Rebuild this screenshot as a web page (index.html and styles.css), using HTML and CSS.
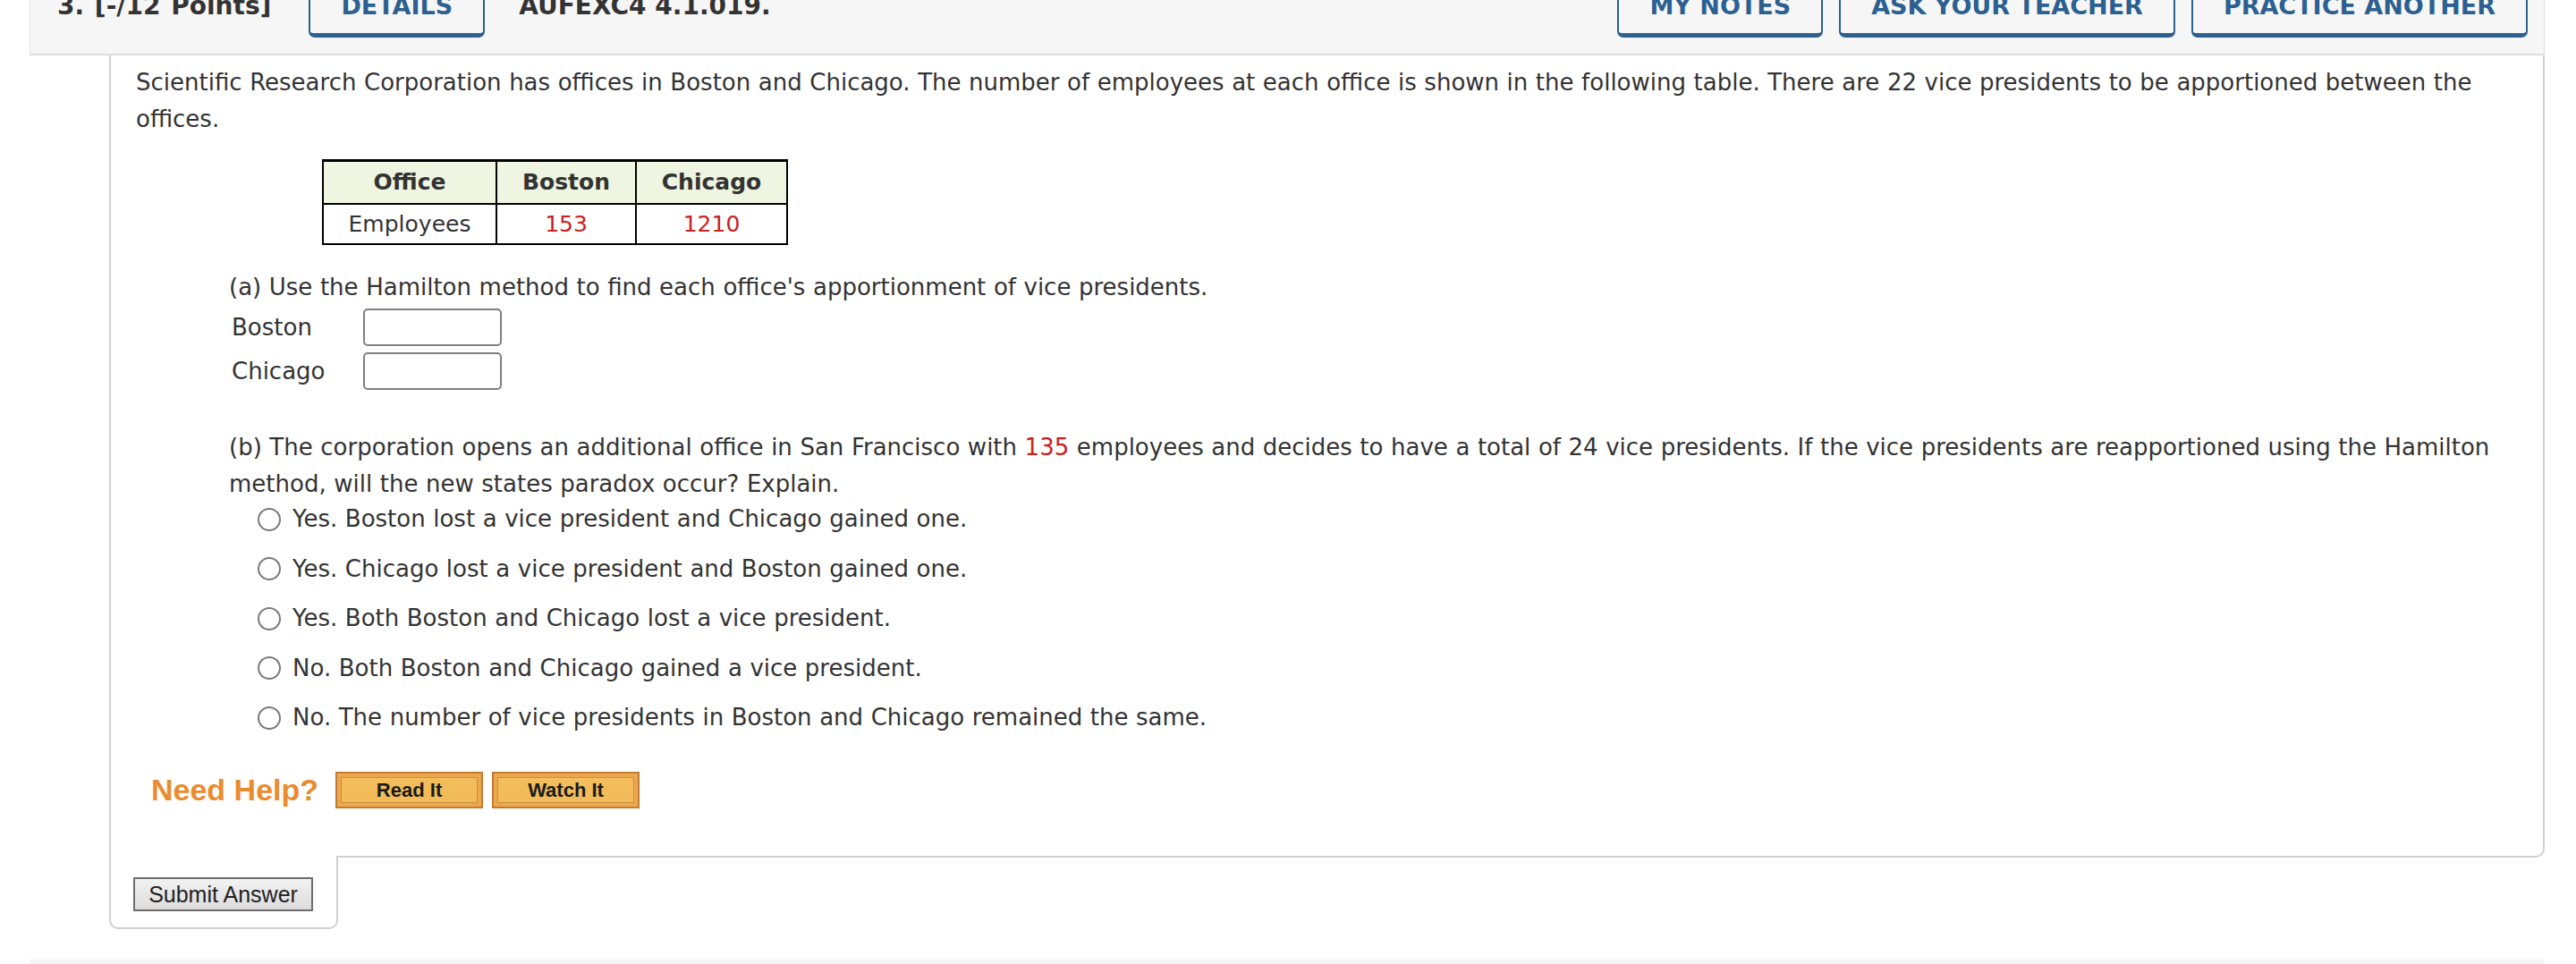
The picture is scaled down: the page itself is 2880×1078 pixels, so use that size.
FILE: index.html
```html
<!DOCTYPE html>
<html lang="en">
<head>
<meta charset="utf-8">
<title>Question 3</title>
<link rel="stylesheet" href="styles.css">
</head>
<body>
<div class="header">
  <div class="title num">3. [-/12 Points]</div>
  <div class="hbtn">DETAILS</div>
  <div class="title code">AUFEXC4 4.1.019.</div>
  <div class="hbtn push">MY NOTES</div>
  <div class="hbtn">ASK YOUR TEACHER</div>
  <div class="hbtn">PRACTICE ANOTHER</div>
</div>
<div class="question">
  <p class="intro">Scientific Research Corporation has offices in Boston and Chicago. The number of employees at each office is shown in the following table. There are 22 vice presidents to be apportioned between the offices.</p>
  <table class="data">
    <tr><th class="c1">Office</th><th class="c2">Boston</th><th class="c3">Chicago</th></tr>
    <tr><td>Employees</td><td class="red">153</td><td class="red">1210</td></tr>
  </table>
  <div class="part parta">
    <p class="ptext">(a) Use the Hamilton method to find each office's apportionment of vice presidents.</p>
    <div class="ans-row"><span class="lbl">Boston</span><input class="ans" type="text"></div>
    <div class="ans-row"><span class="lbl">Chicago</span><input class="ans" type="text"></div>
  </div>
  <div class="part partb">
    <p class="ptext">(b) The corporation opens an additional office in San Francisco with <span class="red">135</span> employees and decides to have a total of 24 vice presidents. If the vice presidents are reapportioned using the Hamilton method, will the new states paradox occur? Explain.</p>
    <ul class="options">
      <li><input type="radio" name="b" class="radio"><span>Yes. Boston lost a vice president and Chicago gained one.</span></li>
      <li><input type="radio" name="b" class="radio"><span>Yes. Chicago lost a vice president and Boston gained one.</span></li>
      <li><input type="radio" name="b" class="radio"><span>Yes. Both Boston and Chicago lost a vice president.</span></li>
      <li><input type="radio" name="b" class="radio"><span>No. Both Boston and Chicago gained a vice president.</span></li>
      <li><input type="radio" name="b" class="radio"><span>No. The number of vice presidents in Boston and Chicago remained the same.</span></li>
    </ul>
  </div>
  <div class="help">
    <span class="need">Need Help?</span>
    <span class="hb read">Read It</span>
    <span class="hb">Watch It</span>
  </div>
</div>
<div class="tab"><button class="submit" type="button">Submit Answer</button></div>
<div class="band"></div>
</body>
</html>
```
FILE: styles.css
```css
html, body {
  margin: 0;
  padding: 0;
  background: #ffffff;
  overflow: hidden;
}
body {
  font-family: "DejaVu Sans", Verdana, sans-serif;
  color: #333333;
}

/* ---------- header ---------- */
.header {
  box-sizing: border-box;
  margin: -40px 0 0 33px;
  width: 2812px;
  height: 102px;
  background: #f6f6f6;
  border-left: 1px solid #e2e2e2;
  border-right: 1px solid #e2e2e2;
  border-bottom: 2px solid #dddddd;
  display: flex;
  align-items: flex-start;
  padding: 0 18px 0 30px;
}
.title {
  font-size: 28px;
  font-weight: bold;
  line-height: 27px;
  margin-top: 33px;
  color: #333333;
  white-space: nowrap;
}
.title.num { margin-right: 42px; word-spacing: 2px; }
.title.code { margin-left: 38px; }
.hbtn {
  box-sizing: border-box;
  height: 82px;
  border: 2px solid #2c6090;
  border-top: none;
  border-bottom-width: 5px;
  border-radius: 0 0 7px 7px;
  padding: 33px 34px 0;
  font-size: 27px;
  font-weight: bold;
  line-height: 27px;
  color: #2c6090;
  white-space: nowrap;
}
.hbtn + .hbtn { margin-left: 18px; }
.hbtn.push { margin-left: auto; }

/* ---------- question box ---------- */
.question {
  box-sizing: border-box;
  margin-left: 122px;
  width: 2723px;
  border: 2px solid #d0d0d0;
  border-top: none;
  border-bottom-right-radius: 10px;
  padding: 10px 35px 53px 28px;
  font-size: 26px;
  line-height: 41px;
  word-spacing: 0.3px;
}
.intro { margin: 0; }
.red { color: #c9211e; }

.data {
  border-collapse: collapse;
  margin: 24px 0 0 208px;
  font-size: 25px;
  line-height: 30px;
  word-spacing: 0;
}
.data th, .data td {
  border: 2px solid #000000;
  padding: 0;
  text-align: center;
}
.data tr:first-child th { border-top-width: 3px; }
.data th {
  background: #eef5e1;
  font-weight: bold;
  height: 46px;
}
.data td { height: 43px; }
.data .c1 { width: 192px; }
.data .c2 { width: 154px; }
.data .c3 { width: 167px; }

.part { margin-left: 104px; }
.ptext { margin: 0; }
.parta { margin-top: 27px; }
.ans-row {
  display: flex;
  align-items: center;
  height: 42px;
  margin-top: 3px;
}
.ans-row + .ans-row { margin-top: 7px; }
.lbl {
  box-sizing: border-box;
  width: 150px;
  padding-left: 3px;
  line-height: 30px;
}
.ans {
  box-sizing: border-box;
  width: 155px;
  height: 42px;
  margin: 0;
  border: 2px solid #7f7f7f;
  border-radius: 5px;
  background: #ffffff;
}

.partb { margin-top: 44px; }
.options {
  list-style: none;
  margin: 0 0 0 32px;
  padding: 0;
}
.options li {
  display: flex;
  align-items: center;
  height: 37px;
  margin-bottom: 18.5px;
}
.options li:last-child { margin-bottom: 0; }
.radio {
  appearance: none;
  -webkit-appearance: none;
  box-sizing: border-box;
  width: 26px;
  height: 26px;
  margin: 0 13px 0 0;
  border: 2px solid #7a7a7a;
  border-radius: 50%;
  background: #ffffff;
}

/* ---------- need help ---------- */
.help {
  display: flex;
  align-items: center;
  height: 41px;
  margin: 42px 0 0 17px;
}
.need {
  font-family: "Liberation Sans", Arial, sans-serif;
  font-weight: bold;
  font-size: 34px;
  color: #e98c30;
  margin-right: 19px;
  line-height: 41px;
  word-spacing: 0;
}
.hb {
  box-sizing: border-box;
  width: 165px;
  height: 41px;
  border: 2px solid #c07c34;
  background: linear-gradient(#f8d488 0, #f3bd5c 18%, #f2ba58 100%);
  box-shadow: inset 0 0 0 4px #efa74c, inset 0 0 0 5px #c2904a;
  font-family: "Liberation Sans", Arial, sans-serif;
  font-weight: bold;
  font-size: 22px;
  color: #1a1a1a;
  display: flex;
  align-items: center;
  justify-content: center;
  word-spacing: 0;
}
.hb.read { margin-right: 10px; }

/* ---------- submit tab ---------- */
.tab {
  box-sizing: border-box;
  margin: -2px 0 0 122px;
  width: 256px;
  height: 82px;
  background: #ffffff;
  border: 2px solid #d0d0d0;
  border-top: none;
  border-radius: 0 0 10px 10px;
  padding: 24px 0 0 25px;
}
.submit {
  box-sizing: border-box;
  width: 201px;
  height: 38px;
  margin: 0;
  padding: 0;
  border: 2px solid #6e6e6e;
  background: linear-gradient(#f2f2f2, #dcdcdc);
  font-family: "Liberation Sans", Arial, sans-serif;
  font-size: 25px;
  color: #222222;
}

.band {
  margin: 34px 0 0 33px;
  width: 2812px;
  height: 7px;
  background: #f4f4f4;
}
```
